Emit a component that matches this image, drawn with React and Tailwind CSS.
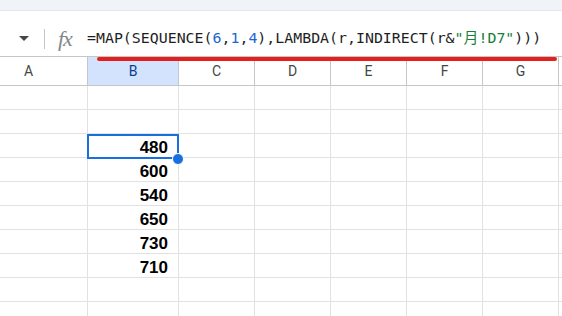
import React from 'react';

const COLS = [
  { key: 'A', w: 'w-[118px] ml-[-30px]' },
  { key: 'B', w: 'w-[91px]' },
  { key: 'C', w: 'w-[76px]' },
  { key: 'D', w: 'w-[76px]' },
  { key: 'E', w: 'w-[76px]' },
  { key: 'F', w: 'w-[76px]' },
  { key: 'G', w: 'w-[76px]' },
  { key: 'H', w: 'w-[76px]' },
];

const VALUES = [null, null, 480, 600, 540, 650, 730, 710, null, null, null];

export default function App() {
  return (
    <div className="relative w-[562px] h-[316px] overflow-hidden bg-white font-['Roboto',Arial,sans-serif]">
      {/* Toolbar strip */}
      <div className="h-[11px] bg-[#f0f4f9] border-b border-[#e3e7ec]" />

      {/* Formula bar */}
      <div className="h-[45px] pt-[10px] flex items-center">
        <div className="w-[44px] flex justify-center">
          <svg width="10" height="6" viewBox="0 0 10 6" className="ml-[3px]">
            <path d="M0 0h10L5 5z" fill="#444746" />
          </svg>
        </div>
        <div className="w-px h-[20px] bg-[#c4c7c5]" />
        <span className="ml-[13px] w-[28px] text-[22px] leading-none italic text-[#80868b] font-['Liberation_Serif',serif] tracking-[-1px]">fx</span>
        <span className="ml-[1px] text-[14.9px] text-[#1f1f1f] whitespace-nowrap font-['DejaVu_Sans_Mono','Noto_Sans_CJK_JP',monospace]">
          =MAP(SEQUENCE(<span className="text-[#1a66d2]">6</span>,<span className="text-[#1a66d2]">1</span>,<span className="text-[#1a66d2]">4</span>),LAMBDA(r,INDIRECT(r&amp;<span className="text-[#188038]">"月!D7"</span>)))
        </span>
      </div>

      {/* Column headers */}
      <div className="flex h-[30px] border-t border-b border-[#c4c7c5]">
        {COLS.map(c => (
          <div
            key={c.key}
            className={`${c.w} shrink-0 flex items-center justify-center border-r border-[#c4c7c5] text-[14px] ${c.key === 'B' ? 'bg-[#d3e3fd] text-[#0b3d91]' : 'text-[#444746]'}`}
          >
            {c.key === 'H' ? '' : c.key}
          </div>
        ))}
      </div>

      {/* Rows */}
      {VALUES.map((v, i) => (
        <div key={i} className="flex h-[24px] border-b border-[#e1e1e1]">
          {COLS.map(c => (
            <div
              key={c.key}
              className={`${c.w} shrink-0 border-r border-[#e1e1e1] flex items-center justify-end pr-[10px] pt-[4px] font-['Liberation_Sans',Arial,sans-serif] font-bold text-[17px] text-black`}
            >
              {c.key === 'B' && v !== null ? v : ''}
            </div>
          ))}
        </div>
      ))}

      {/* Selected cell B3 */}
      <div className="absolute left-[87px] top-[134px] w-[92px] h-[25px] border-2 border-[#1a6fdf]" />
      <div className="absolute left-[172px] top-[153px] w-[12px] h-[12px] rounded-full bg-[#1a6fdf] border border-white" />

      {/* Red annotation underline */}
      <div className="absolute left-[97px] top-[57px] w-[460px] h-[4px] rounded-full bg-[#e3201d]" />
    </div>
  );
}
